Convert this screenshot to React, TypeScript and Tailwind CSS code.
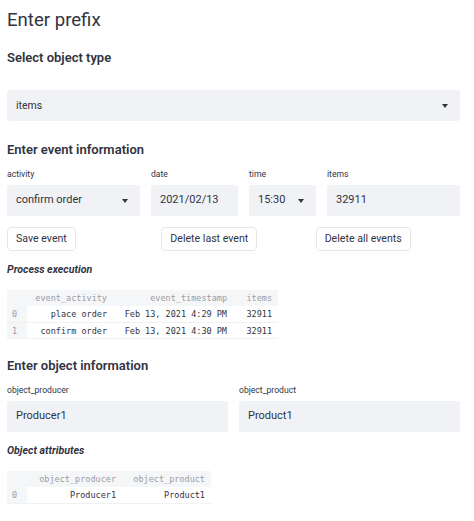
import React from 'react';

const sans = { fontFamily: 'Roboto, "Noto Sans", sans-serif' };

function Caret() {
  return (
    <svg width="6" height="4" viewBox="0 0 6 4" className="shrink-0">
      <path d="M0 0 L6 0 L3 4 Z" fill="#31333f" />
    </svg>
  );
}

function Field({ label, value, select, className = '' }: { label: string; value: string; select?: boolean; className?: string }) {
  return (
    <div className={`flex flex-col ${className}`}>
      <div className="h-[14px] text-[8.6px] leading-[14px] text-[#31333f]">{label}</div>
      <div className="mt-[4px] flex h-[31px] items-center justify-between rounded-[3px] bg-[#f0f2f6] pl-[9px] pr-[12px] text-[11px] text-[#31333f]">
        <span>{value}</span>
        {select && <Caret />}
      </div>
    </div>
  );
}

function Btn({ children }: { children: React.ReactNode }) {
  return (
    <button className="flex h-[24px] items-center rounded-[4px] border border-[#e6e7ea] bg-white px-[8px] text-[10.6px] text-[#31333f]">
      {children}
    </button>
  );
}

type Col = { name: string; w: string };

function Table({ cols, rows, width }: { cols: Col[]; rows: string[][]; width: string }) {
  return (
    <div className={`${width} text-[8.5px] leading-[16px]`} style={{ fontFamily: '"DejaVu Sans Mono", "Liberation Mono", monospace' }}>
      <div className="flex h-[16px] bg-[#f5f6f8] text-[#9a9ca6]">
        <div className="w-[20px]" />
        {cols.map((c) => (
          <div key={c.name} className={`${c.w} pr-[6px] text-right`}>{c.name}</div>
        ))}
      </div>
      {rows.map((r, i) => (
        <div key={i} className="flex h-[16.5px] border-b border-[#f0f1f3]">
          <div className="w-[20px] bg-[#f5f6f8] pl-[5px] text-[#9a9ca6]">{i}</div>
          {r.map((v, j) => (
            <div key={j} className={`${cols[j].w} pr-[6px] text-right text-[#31333f]`}>{v}</div>
          ))}
        </div>
      ))}
    </div>
  );
}

export default function App() {
  return (
    <div className="min-h-screen bg-white px-[7px] text-[#31333f]" style={sans}>
      <h1 className="pt-[6px] text-[18.6px] font-normal leading-[28px]">Enter prefix</h1>

      <h2 className="mt-[14px] text-[13px] font-semibold leading-[20px]">Select object type</h2>
      <div className="mt-[22px] flex h-[31px] w-[453px] items-center justify-between rounded-[3px] bg-[#f0f2f6] pl-[9px] pr-[12px] text-[10.5px]">
        <span>items</span>
        <Caret />
      </div>

      <h2 className="mt-[19px] text-[13px] font-semibold leading-[20px]">Enter event information</h2>
      <div className="mt-[7px] flex w-[453px] gap-[11px]">
        <Field className="w-[133px]" label="activity" value="confirm order" select />
        <Field className="w-[87px]" label="date" value="2021/02/13" />
        <Field className="w-[67px]" label="time" value="15:30" select />
        <Field className="flex-1" label="items" value="32911" />
      </div>

      <div className="mt-[11px] grid w-[454px] grid-cols-3 gap-[9px]">
        <div className="flex"><Btn>Save event</Btn></div>
        <div className="flex"><Btn>Delete last event</Btn></div>
        <div className="flex"><Btn>Delete all events</Btn></div>
      </div>

      <div className="mt-[11px] text-[10.6px] font-bold italic leading-[16px]">Process execution</div>
      <div className="mt-[12px]">
        <Table
          width="w-[271px]"
          cols={[
            { name: 'event_activity', w: 'w-[86px]' },
            { name: 'event_timestamp', w: 'w-[120px]' },
            { name: 'items', w: 'w-[45px]' },
          ]}
          rows={[
            ['place order', 'Feb 13, 2021 4:29 PM', '32911'],
            ['confirm order', 'Feb 13, 2021 4:30 PM', '32911'],
          ]}
        />
      </div>

      <h2 className="mt-[17px] text-[13px] font-semibold leading-[20px]">Enter object information</h2>
      <div className="mt-[7px] flex w-[453px] gap-[11px]">
        <Field className="flex-1" label="object_producer" value="Producer1" />
        <Field className="flex-1" label="object_product" value="Product1" />
      </div>

      <div className="mt-[11px] text-[10.6px] font-bold italic leading-[16px]">Object attributes</div>
      <div className="mt-[12px] pb-[16px]">
        <Table
          width="w-[204px]"
          cols={[
            { name: 'object_producer', w: 'w-[95px]' },
            { name: 'object_product', w: 'w-[89px]' },
          ]}
          rows={[['Producer1', 'Product1']]}
        />
      </div>
    </div>
  );
}
